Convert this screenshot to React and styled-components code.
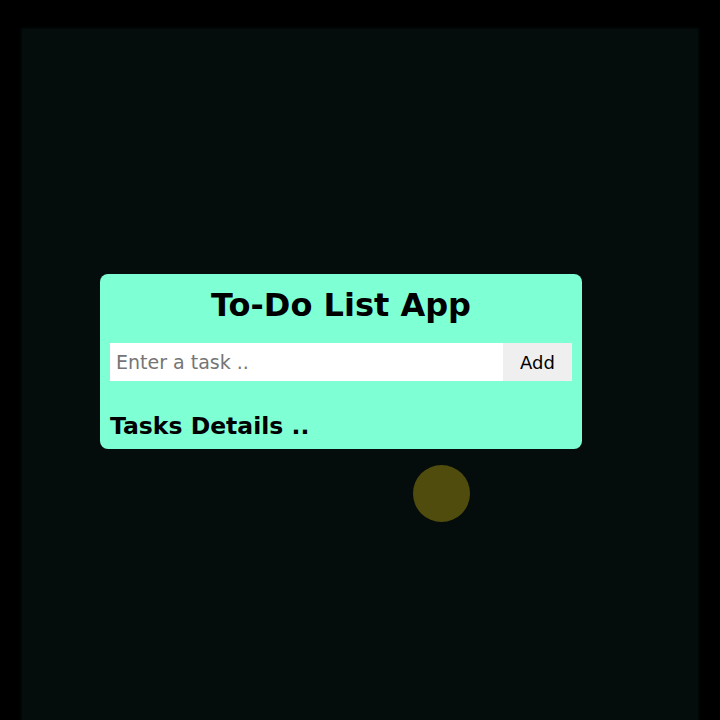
import React, { useState } from 'react';
import styled, { createGlobalStyle } from 'styled-components';

const GlobalStyle = createGlobalStyle`
  html, body {
    margin: 0;
    padding: 0;
    background: #000;
    font-family: "DejaVu Sans", Verdana, sans-serif;
  }
`;

const Page = styled.div`
  width: 720px;
  height: 720px;
  overflow: hidden;
  padding: 29px 22px 0 22px;
  box-sizing: border-box;
`;

const Stage = styled.div`
  position: relative;
  width: 676px;
  height: 700px;
  background: #040c0c;
  box-shadow: 0 0 3px 1px #040c0c;
  padding: 245px 0 0 78px;
  box-sizing: border-box;
`;

const Card = styled.div`
  width: 482px;
  box-sizing: border-box;
  padding: 12px 10px 9px 10px;
  background: #7fffd4;
  border-radius: 8px;
`;

const Title = styled.h1`
  margin: 0 0 19px 0;
  font-size: 32px;
  font-weight: bold;
  text-align: center;
  color: #000;
`;

const InputRow = styled.div`
  display: flex;
  height: 38px;
`;

const TaskInput = styled.input`
  flex: 1;
  border: none;
  outline: none;
  padding: 0 6px;
  font-family: inherit;
  font-size: 19px;
  background: #fff;
  color: #000;

  &::placeholder {
    color: #757575;
  }
`;

const AddButton = styled.button`
  width: 69px;
  border: none;
  background: #efefef;
  font-family: inherit;
  font-size: 18px;
  color: #000;
  cursor: pointer;
`;

const SubTitle = styled.h2`
  margin: 31px 0 0 0;
  font-size: 23.5px;
  font-weight: bold;
  color: #000;
`;

const Dot = styled.div`
  position: absolute;
  left: 391px;
  top: 436px;
  width: 57px;
  height: 57px;
  border-radius: 50%;
  background: #4f4c0d;
`;

export default function App() {
  const [task, setTask] = useState('');
  return (
    <>
      <GlobalStyle />
      <Page>
        <Stage>
          <Card>
            <Title>To-Do List App</Title>
            <InputRow>
              <TaskInput
                placeholder="Enter a task .."
                value={task}
                onChange={(e) => setTask(e.target.value)}
              />
              <AddButton>Add</AddButton>
            </InputRow>
            <SubTitle>Tasks Details ..</SubTitle>
          </Card>
          <Dot />
        </Stage>
      </Page>
    </>
  );
}
